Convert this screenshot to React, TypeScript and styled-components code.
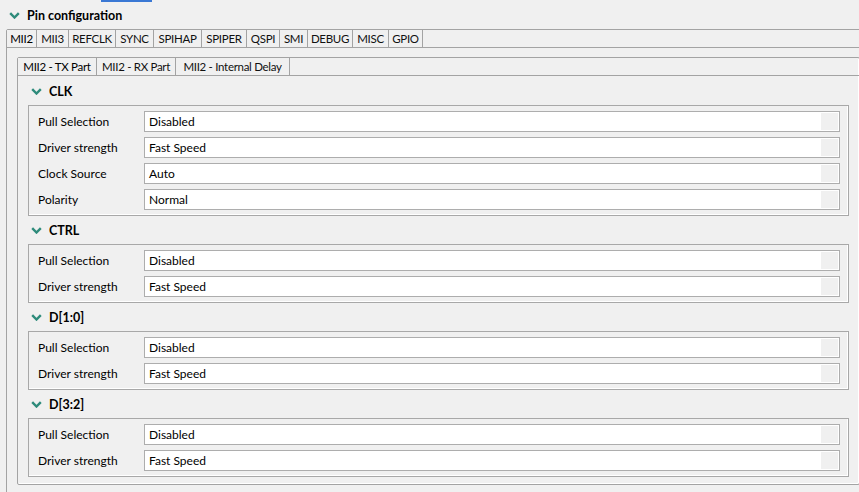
import React from 'react'
import styled, {createGlobalStyle} from 'styled-components';

type IField = {
    label: string;
    value: string;
}

type ISection = {
    title: string;
    fields: IField[];
}

type ITab = {
    name: string;
    width: number;
}

const outerTabs: ITab[] = [
    {name: 'MII2', width: 30},
    {name: 'MII3', width: 32},
    {name: 'REFCLK', width: 47},
    {name: 'SYNC', width: 38},
    {name: 'SPIHAP', width: 48},
    {name: 'SPIPER', width: 45},
    {name: 'QSPI', width: 33},
    {name: 'SMI', width: 28},
    {name: 'DEBUG', width: 45},
    {name: 'MISC', width: 36},
    {name: 'GPIO', width: 34},
];

const innerTabs: ITab[] = [
    {name: 'MII2 - TX Part', width: 79},
    {name: 'MII2 - RX Part', width: 79},
    {name: 'MII2 - Internal Delay', width: 114},
];

const pull = {label: 'Pull Selection', value: 'Disabled'};
const drive = {label: 'Driver strength', value: 'Fast Speed'};

const sections: ISection[] = [
    {title: 'CLK', fields: [pull, drive, {label: 'Clock Source', value: 'Auto'}, {label: 'Polarity', value: 'Normal'}]},
    {title: 'CTRL', fields: [pull, drive]},
    {title: 'D[1:0]', fields: [pull, drive]},
    {title: 'D[3:2]', fields: [pull, drive]},
];

const Chevron = () => (
    <svg width="11" height="7" viewBox="0 0 11 7">
        <path d="M1.2 1.2 L5.5 5.5 L9.8 1.2" fill="none" stroke="#2e8b7b" strokeWidth="2.4" />
    </svg>
)

const App = () => {
  return (
    <Page>
        <GlobalStyle/>
        <TopStrip>
            <ActiveMark/>
        </TopStrip>
        <Heading>
            <Chevron/>
            <HeadingText>Pin configuration</HeadingText>
        </Heading>
        <OuterFrame>
            <TabBar>
                {outerTabs.map((t, i) => (
                    <Tab key={t.name} $width={t.width} $active={i === 0}>{t.name}</Tab>
                ))}
            </TabBar>
            <OuterBody>
                <InnerFrame>
                    <TabBar>
                        {innerTabs.map((t, i) => (
                            <Tab key={t.name} $width={t.width} $active={i === 0}>{t.name}</Tab>
                        ))}
                    </TabBar>
                    <InnerBody>
                        {sections.map(s => (
                            <Section key={s.title}>
                                <SectionHeader>
                                    <Chevron/>
                                    <SectionTitle>{s.title}</SectionTitle>
                                </SectionHeader>
                                <GroupBox>
                                    {s.fields.map(f => (
                                        <React.Fragment key={f.label}>
                                            <Label>{f.label}</Label>
                                            <Combo>
                                                <ComboText>{f.value}</ComboText>
                                                <ComboButton/>
                                            </Combo>
                                        </React.Fragment>
                                    ))}
                                </GroupBox>
                            </Section>
                        ))}
                    </InnerBody>
                </InnerFrame>
            </OuterBody>
        </OuterFrame>
    </Page>
  )
}

export default App

const GlobalStyle = createGlobalStyle`
html, body {
margin: 0;
padding: 0;
background: #f0f0f0;
overflow: hidden;
}
body {
font-family: Lato, "Liberation Sans", sans-serif;
font-size: 12px;
color: #000;
}
`

const Page = styled.div`
width: 859px;
height: 492px;
overflow: hidden;
`

const TopStrip = styled.div`
height: 2px;
display: flex;
`

const ActiveMark = styled.div`
margin-left: 101px;
width: 51px;
background: #3a78d4;
`

const Heading = styled.div`
height: 27px;
display: flex;
align-items: center;
gap: 7px;
padding-left: 9px;
`

const HeadingText = styled.span`
font-weight: 700;
font-size: 12.5px;
`

const OuterFrame = styled.div`
margin-left: 6px;
width: 863px;
border: 1px solid #a3a3a3;
border-radius: 2px;
`

const TabBar = styled.div`
display: flex;
height: 17px;
border-bottom: 1px solid #a3a3a3;
`

const Tab = styled.div<{$width: number; $active: boolean}>`
box-sizing: border-box;
flex-shrink: 0;
min-width: ${p => p.$width}px;
padding: 0 2px;
font-size: 11.5px;
letter-spacing: -0.3px;
line-height: 17px;
text-align: center;
white-space: nowrap;
border-right: 1px solid #a3a3a3;
background: #f0f0f0;
color: ${p => p.$active ? '#000' : '#111'};
`

const OuterBody = styled.div`
padding: 9px 10px 10px 10px;
`

const InnerFrame = styled.div`
border: 1px solid #a3a3a3;
border-radius: 2px;
box-shadow: inset -1px -1px 0 #fff;
`

const InnerBody = styled.div`
padding: 1px 10px 7px 10px;
`

const Section = styled.div`
display: flex;
flex-direction: column;
`

const SectionHeader = styled.div`
height: 28px;
display: flex;
align-items: center;
gap: 7px;
padding-left: 3px;
`

const SectionTitle = styled.span`
font-weight: 700;
font-size: 12.5px;
`

const GroupBox = styled.div`
display: grid;
grid-template-columns: 106px 1fr;
row-gap: 5px;
padding: 5px 8px 5px 9px;
border: 1px solid #a8a8a8;
box-shadow: inset -1px -1px 0 #fff;
`

const Label = styled.div`
line-height: 21px;
white-space: nowrap;
`

const Combo = styled.div`
height: 21px;
box-sizing: border-box;
border: 1px solid #adadad;
background: #fff;
display: flex;
align-items: center;
padding-left: 4px;
`

const ComboText = styled.span`
flex: 1;
`

const ComboButton = styled.div`
width: 17px;
height: 17px;
margin-right: 1px;
background: #f0f0f0;
`
